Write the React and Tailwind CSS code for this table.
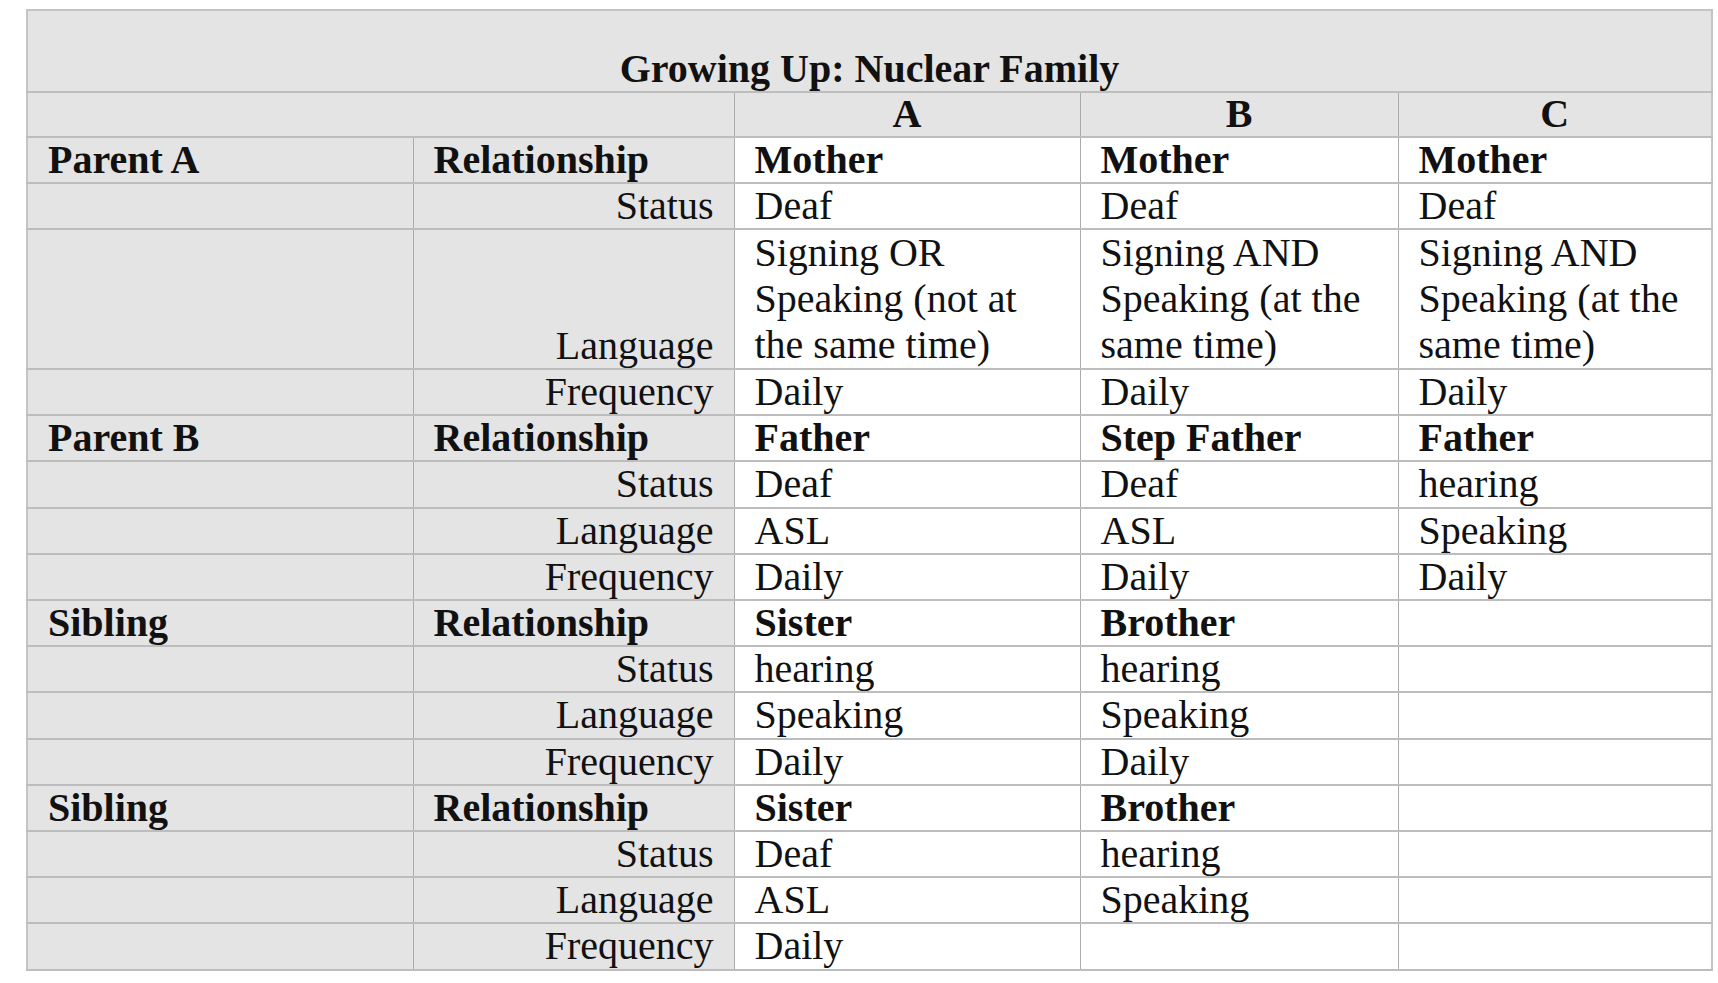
const groups = [
  {
    name: "Parent A",
    rows: [
      ["Relationship", "Mother", "Mother", "Mother"],
      ["Status", "Deaf", "Deaf", "Deaf"],
      [
        "Language",
        ["Signing OR", "Speaking (not at", "the same time)"],
        ["Signing AND", "Speaking (at the", "same time)"],
        ["Signing AND", "Speaking (at the", "same time)"],
      ],
      ["Frequency", "Daily", "Daily", "Daily"],
    ],
  },
  {
    name: "Parent B",
    rows: [
      ["Relationship", "Father", "Step Father", "Father"],
      ["Status", "Deaf", "Deaf", "hearing"],
      ["Language", "ASL", "ASL", "Speaking"],
      ["Frequency", "Daily", "Daily", "Daily"],
    ],
  },
  {
    name: "Sibling",
    rows: [
      ["Relationship", "Sister", "Brother", ""],
      ["Status", "hearing", "hearing", ""],
      ["Language", "Speaking", "Speaking", ""],
      ["Frequency", "Daily", "Daily", ""],
    ],
  },
  {
    name: "Sibling",
    rows: [
      ["Relationship", "Sister", "Brother", ""],
      ["Status", "Deaf", "hearing", ""],
      ["Language", "ASL", "Speaking", ""],
      ["Frequency", "Daily", "", ""],
    ],
  },
];

const cell = "border-b-2 border-b-[#bdbdbd] border-r border-r-[#ababab] px-5 leading-[44.2px]";

const Value = ({ v, bold }) => {
  if (Array.isArray(v)) {
    return v.map((line, i) => (
      <div key={i} className="leading-[46px]">
        {line}
      </div>
    ));
  }
  return bold ? <strong>{v}</strong> : v;
};

export default function App() {
  return (
    <div className="w-[1718px] h-[983px] bg-white pt-[9px] pl-[26px]">
      <table
        className="table-fixed border-collapse border-2 border-[#c4c4c4] text-[40px] text-[#111]"
        style={{ fontFamily: '"Liberation Serif", "Times New Roman", serif' }}
      >
        <colgroup>
          <col className="w-[386px]" />
          <col className="w-[321px]" />
          <col className="w-[346px]" />
          <col className="w-[318px]" />
          <col className="w-[314px]" />
        </colgroup>
        <tbody>
          <tr className="bg-[#e4e4e4]">
            <td colSpan={5} className={cell + " h-[82px] align-bottom text-center font-bold"}>
              Growing Up: Nuclear Family
            </td>
          </tr>
          <tr className="bg-[#e4e4e4] font-bold">
            <td colSpan={2} className={cell + " !leading-[42.5px]"}></td>
            <td className={cell + " text-center !leading-[42.5px]"}>A</td>
            <td className={cell + " text-center !leading-[42.5px]"}>B</td>
            <td className={cell + " text-center !leading-[42.5px]"}>C</td>
          </tr>
          {groups.map((g, gi) =>
            g.rows.map((r, ri) => {
              const bold = ri === 0;
              return (
                <tr key={gi + "-" + ri}>
                  <td className={cell + " bg-[#e4e4e4] font-bold align-bottom"}>{ri === 0 ? g.name : ""}</td>
                  <td
                    className={
                      cell +
                      " bg-[#e4e4e4] align-bottom " +
                      (bold ? "font-bold text-left" : "text-right")
                    }
                  >
                    {r[0]}
                  </td>
                  {r.slice(1).map((v, ci) => (
                    <td key={ci} className={cell + " bg-white align-top whitespace-nowrap"}>
                      <Value v={v} bold={bold} />
                    </td>
                  ))}
                </tr>
              );
            })
          )}
        </tbody>
      </table>
    </div>
  );
}
